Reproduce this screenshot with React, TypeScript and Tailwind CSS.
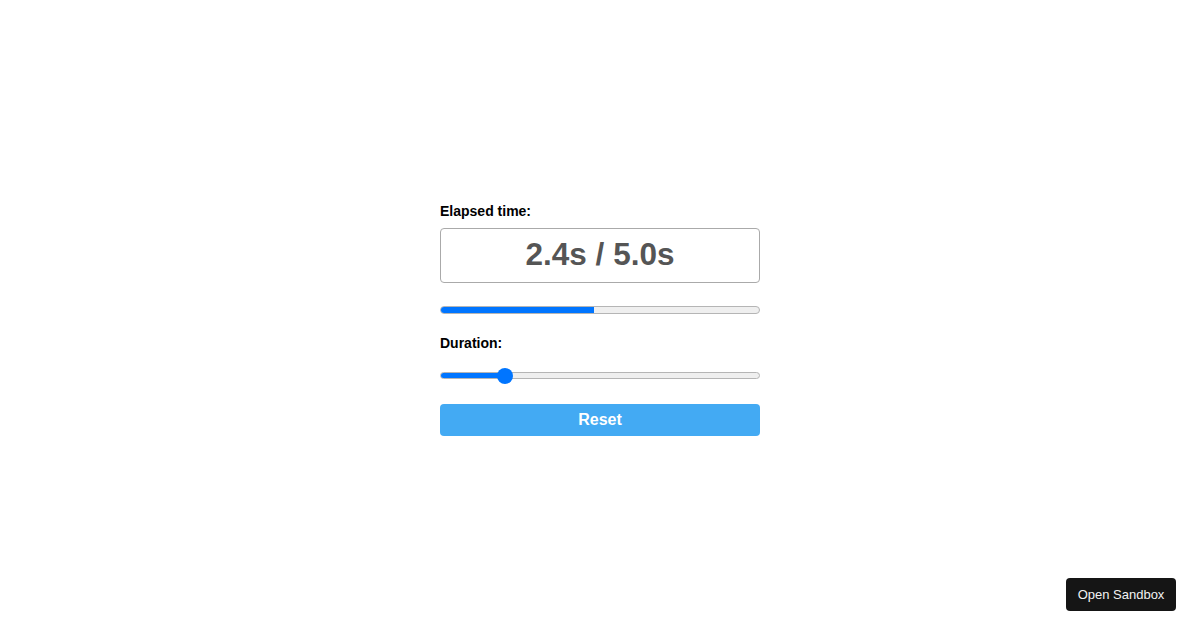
import { useState } from "react";

export default function App() {
  const [elapsed] = useState(2.4);
  const [duration] = useState(5);
  const min = 2;
  const max = 18;
  const pct = (elapsed / duration) * 100;
  const sliderFrac = (duration - min) / (max - min);

  return (
    <div className="min-h-screen w-full bg-white flex items-center justify-center font-['Liberation_Sans',Arial,sans-serif]">
      <div className="w-[320px] flex flex-col pt-[6px]">
        <label className="text-[14px] leading-[20px] font-bold text-black">Elapsed time:</label>

        <div className="mt-[7px] h-[55px] border border-[#aaaaaa] rounded-[4px] flex items-center justify-center">
          <span className="text-[31.5px] font-bold text-[#555555] leading-none">
            {elapsed.toFixed(1)}s / {duration.toFixed(1)}s
          </span>
        </div>

        {/* progress */}
        <div className="mt-[23px] h-[8px] w-full rounded-full border border-[#b5b5b5] bg-[#efefef] overflow-hidden">
          <div className="h-full bg-[#0075ff]" style={{ width: `${pct}%` }} />
        </div>

        <label className="mt-[19px] text-[14px] leading-[20px] font-bold text-black">Duration:</label>

        {/* slider */}
        <div className="mt-[15px] relative h-[16px] flex items-center">
          <div className="w-full h-[7px] rounded-full border border-[#b5b5b5] bg-[#efefef] overflow-hidden">
            <div className="h-full bg-[#0075ff]" style={{ width: `${8 + sliderFrac * 304}px` }} />
          </div>
          <div
            className="absolute top-0 w-[16px] h-[16px] rounded-full bg-[#0075ff]"
            style={{ left: `${sliderFrac * 304}px` }}
          />
        </div>

        <button className="mt-[20px] h-[32px] w-full rounded-[4px] bg-[#43aaf3] text-white text-[16px] font-bold">
          Reset
        </button>
      </div>

      <button className="fixed right-[24px] bottom-[19px] h-[33px] w-[110px] rounded-[4px] bg-[#151515] text-[#f2f2f2] text-[13px]">
        Open Sandbox
      </button>
    </div>
  );
}
